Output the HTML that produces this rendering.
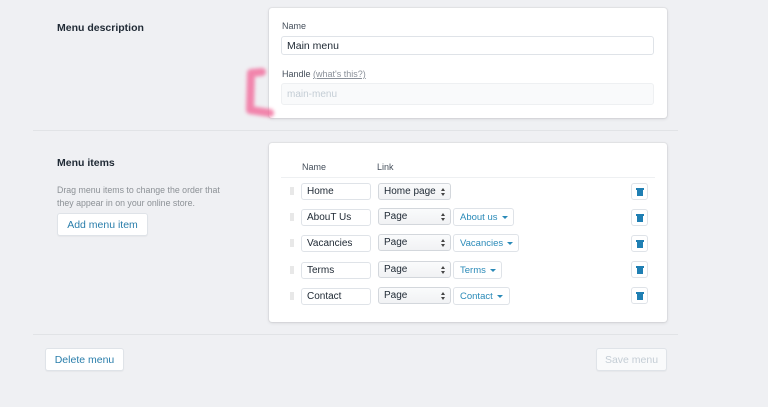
<!DOCTYPE html>
<html><head><style>
*{box-sizing:border-box;margin:0;padding:0}
body{width:768px;height:407px;background:#eff0f3;font-family:"Liberation Sans",sans-serif;position:relative;overflow:hidden;color:#212b36}
.a{position:absolute}
.card{position:absolute;background:#fff;border-radius:3px;box-shadow:0 0 0 1px rgba(63,63,68,.05),0 1px 3px rgba(63,63,68,.15)}
.inp{position:absolute;border:1px solid #dfe3e8;border-radius:3px;background:#fff;font-size:10px;padding-left:5px;display:flex;align-items:center}
.sel{position:absolute;border:1px solid #d3d7dc;border-radius:3px;background:linear-gradient(#fafbfc,#f1f2f4);font-size:10px;padding-left:5px;display:flex;align-items:center}
.sel:after{content:"";position:absolute;right:5px;top:4px;width:0;height:0;border-left:2px solid transparent;border-right:2px solid transparent;border-bottom:3px solid #444;}
.sel:before{content:"";position:absolute;right:5px;top:9px;width:0;height:0;border-left:2px solid transparent;border-right:2px solid transparent;border-top:3px solid #444;}
.lk{position:absolute;border:1px solid #dfe3e8;border-radius:3px;background:#fff;font-size:9.5px;color:#2a8ab8;padding-left:6px;display:flex;align-items:center}
.lk span{display:inline-block;margin-left:4px;border-left:3px solid transparent;border-right:3px solid transparent;border-top:3px solid #2a8ab8}
.tr{position:absolute;width:17px;height:17px;border:1px solid #dfe3e8;border-radius:3px;background:#fff}
.tr i{position:absolute;left:5px;top:6px;width:6px;height:6px;background:#1f7fb3}
.tr b{position:absolute;left:4px;top:4px;width:8px;height:1.5px;background:#1f7fb3}
.dh{position:absolute;left:290px;width:4px;height:8px;background:radial-gradient(circle,#aaa 0.6px,transparent 0.8px) 0 0/2px 2px}
.btn{position:absolute;background:#fff;border:1px solid #dfe3e8;border-radius:3px;font-size:10.5px;color:#2a7eab;display:flex;align-items:center;justify-content:center;box-shadow:0 1px 1px rgba(0,0,0,.04)}
.hr{position:absolute;left:33px;width:645px;height:1px;background:#e1e3e6}
</style></head><body>
<div class="a" style="left:57px;top:22px;font-size:10.5px;font-weight:bold">Menu description</div>
<div class="card" style="left:269px;top:8px;width:398px;height:110px"></div>
<div class="a" style="left:282px;top:21px;font-size:9px;color:#454f5b">Name</div>
<div class="inp" style="left:281px;top:36px;width:373px;height:19px;font-size:10.5px">Main menu</div>
<div class="a" style="left:282px;top:69px;font-size:9px;color:#454f5b">Handle <u style="color:#8a9099">(what's this?)</u></div>
<div class="inp" style="left:281px;top:83px;width:373px;height:22px;background:#f9fafb;color:#c4cdd5;font-size:10px;border-color:#eef0f2">main-menu</div>
<svg class="a" style="left:238px;top:62px" width="45" height="62"><path d="M24 10 L13 11 L12 48 L32 51" fill="none" stroke="#f26a9a" stroke-width="8" stroke-linecap="round" stroke-linejoin="round" opacity=".8" style="filter:blur(1.8px)"/></svg>
<div class="hr" style="top:130px"></div>
<div class="a" style="left:57px;top:157px;font-size:10.5px;font-weight:bold">Menu items</div>
<div class="a" style="left:57px;top:184px;font-size:8.8px;color:#8c9196;line-height:12.5px">Drag menu items to change the order that<br>they appear in on your online store.</div>
<div class="btn" style="left:57px;top:213px;width:91px;height:23px">Add menu item</div>
<div class="card" style="left:269px;top:143px;width:398px;height:179px"></div>
<div class="a" style="left:302px;top:162px;font-size:9px;color:#454f5b">Name</div>
<div class="a" style="left:377px;top:162px;font-size:9px;color:#454f5b">Link</div>
<div class="a" style="left:281px;top:177px;width:374px;height:1px;background:#eef0f2"></div>

<div class="dh" style="top:187px"></div>
<div class="inp" style="left:301px;top:183px;width:70px;height:17px">Home</div>
<div class="sel" style="left:378px;top:183px;width:73px;height:17px">Home page</div>
<div class="tr" style="left:631px;top:183px"><b></b><i></i></div>

<div class="dh" style="top:213px"></div>
<div class="inp" style="left:301px;top:209px;width:70px;height:17px">AbouT Us</div>
<div class="sel" style="left:378px;top:208px;width:73px;height:17px">Page</div>
<div class="lk" style="left:453px;top:208px;width:61px;height:18px">About us<span></span></div>
<div class="tr" style="left:631px;top:209px"><b></b><i></i></div>

<div class="dh" style="top:239px"></div>
<div class="inp" style="left:301px;top:235px;width:70px;height:17px">Vacancies</div>
<div class="sel" style="left:378px;top:234px;width:73px;height:17px">Page</div>
<div class="lk" style="left:453px;top:234px;width:66px;height:18px">Vacancies<span></span></div>
<div class="tr" style="left:631px;top:235px"><b></b><i></i></div>

<div class="dh" style="top:266px"></div>
<div class="inp" style="left:301px;top:262px;width:70px;height:17px">Terms</div>
<div class="sel" style="left:378px;top:261px;width:73px;height:17px">Page</div>
<div class="lk" style="left:453px;top:261px;width:49px;height:18px">Terms<span></span></div>
<div class="tr" style="left:631px;top:261px"><b></b><i></i></div>

<div class="dh" style="top:292px"></div>
<div class="inp" style="left:301px;top:288px;width:70px;height:17px">Contact</div>
<div class="sel" style="left:378px;top:287px;width:73px;height:17px">Page</div>
<div class="lk" style="left:453px;top:287px;width:57px;height:18px">Contact<span></span></div>
<div class="tr" style="left:631px;top:287px"><b></b><i></i></div>

<div class="hr" style="top:334px"></div>
<div class="btn" style="left:45px;top:348px;width:79px;height:23px">Delete menu</div>
<div class="btn" style="left:596px;top:348px;width:71px;height:23px;color:#c4cdd5;background:#f9fafb">Save menu</div>
</body></html>
